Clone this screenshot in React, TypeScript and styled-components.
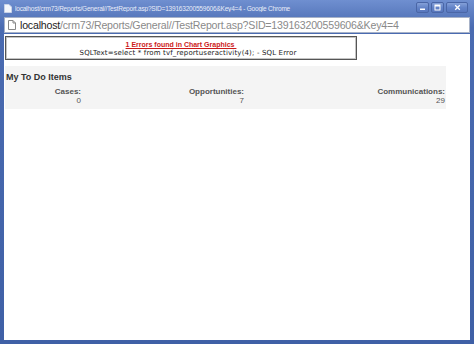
import styled, { createGlobalStyle } from "styled-components";

const GlobalStyle = createGlobalStyle`
  html, body {
    margin: 0;
    padding: 0;
    width: 474px;
    height: 344px;
    overflow: hidden;
    background: #4566a8;
  }
`;

const Window = styled.div`
  width: 474px;
  height: 344px;
  box-sizing: border-box;
  display: flex;
  flex-direction: column;
  background: linear-gradient(180deg, #6f8fd0 0%, #4a6bb1 8%, #3f60a6 100%);
  padding: 0 4px 4px 4px;
`;

const TitleBar = styled.div`
  height: 17px;
  display: flex;
  align-items: center;
  gap: 3px;
  color: #ffffff;
  font-size: 6.5px;
  font-family: "Liberation Sans", Arial, sans-serif;
  white-space: nowrap;
`;

const TitleText = styled.span`
  flex: 1;
  overflow: hidden;
  letter-spacing: -0.2px;
  color: #e8edf9;
`;

const WinButtons = styled.div`
  display: flex;
  gap: 2px;
  align-self: flex-start;
  margin-top: 2px;
  margin-right: 2px;
`;

const WinButton = styled.div<{ wide?: boolean }>`
  width: ${(p) => (p.wide ? "22px" : "13px")};
  height: 11px;
  display: flex;
  align-items: center;
  justify-content: center;
  border-radius: 2px;
  background: linear-gradient(180deg, #84a0d8 0%, #6484c8 50%, #5776bd 100%);
  border: 1px solid #4a66a6;
  box-sizing: border-box;
`;

const AddressBar = styled.div`
  height: 14px;
  background: #ffffff;
  border: 1px solid #a7b2c8;
  display: flex;
  align-items: center;
  gap: 4px;
  padding-left: 3px;
  font-family: "Liberation Sans", Arial, sans-serif;
  font-size: 10.6px;
  letter-spacing: -0.2px;
  white-space: nowrap;
  overflow: hidden;
`;

const PageGlyph = styled.svg`
  flex-shrink: 0;
`;

const Host = styled.span`
  color: #222222;
`;

const Path = styled.span`
  color: #8a8a8a;
`;

const Page = styled.div`
  flex: 1;
  background: #ffffff;
  margin-top: 1px;
  padding: 2px 1px 0 1px;
  display: flex;
  flex-direction: column;
  font-family: "Liberation Sans", Arial, sans-serif;
  color: #333333;
`;

const ErrorBox = styled.div`
  width: 352px;
  height: 24px;
  box-sizing: border-box;
  border: 1px solid #555555;
  box-shadow: inset 0 0 0 1px #c4c4c4;
  padding-top: 3px;
  display: flex;
  flex-direction: column;
  align-items: center;
  font-size: 7px;
  line-height: 9px;
`;

const ErrorTitle = styled.span`
  color: #cc1a1a;
  font-weight: bold;
  text-decoration: underline;
`;

const ErrorText = styled.span`
  color: #222222;
  font-family: "DejaVu Sans", Verdana, sans-serif;
  font-size: 7px;
  letter-spacing: 0.15px;
  line-height: 9px;
  margin-left: 14px;
`;

const Panel = styled.div`
  margin-top: 6px;
  width: 441px;
  height: 43px;
  background: #f4f4f4;
  padding: 6px 1px 0 1px;
  box-sizing: border-box;
`;

const PanelTitle = styled.div`
  font-size: 9px;
  font-weight: bold;
  color: #333333;
  margin-bottom: 5px;
`;

const Stats = styled.div`
  display: grid;
  grid-template-columns: 75px 163px 201px;
  font-size: 8px;
  line-height: 9px;
`;

const Stat = styled.div`
  display: flex;
  flex-direction: column;
  align-items: flex-end;
`;

const StatLabel = styled.span`
  font-weight: bold;
  color: #555555;
`;

const StatValue = styled.span`
  color: #555555;
`;

const stats = [
  { label: "Cases:", value: "0" },
  { label: "Opportunities:", value: "7" },
  { label: "Communications:", value: "29" },
];

export default function App() {
  return (
    <>
      <GlobalStyle />
      <Window>
        <TitleBar>
          <PageGlyph width="8" height="9" viewBox="0 0 8 9">
            <path d="M0.5 0.5 H5 L7.5 3 V8.5 H0.5 Z" fill="#f4f6fb" stroke="#c9d3e8" />
          </PageGlyph>
          <TitleText>
            localhost/crm73/Reports/General//TestReport.asp?SID=139163200559606&amp;Key4=4 - Google Chrome
          </TitleText>
          <WinButtons>
            <WinButton>
              <svg width="7" height="7" viewBox="0 0 7 7">
                <rect x="1" y="4.5" width="5" height="1.5" fill="#fff" />
              </svg>
            </WinButton>
            <WinButton>
              <svg width="7" height="7" viewBox="0 0 7 7">
                <rect x="1" y="1" width="5" height="5" fill="none" stroke="#fff" />
                <rect x="1" y="1" width="5" height="1.5" fill="#fff" />
              </svg>
            </WinButton>
            <WinButton wide>
              <svg width="7" height="7" viewBox="0 0 7 7">
                <path d="M1.2 1.2 L5.8 5.8 M5.8 1.2 L1.2 5.8" stroke="#fff" strokeWidth="1.3" />
              </svg>
            </WinButton>
          </WinButtons>
        </TitleBar>
        <AddressBar>
          <PageGlyph width="8" height="10" viewBox="0 0 8 10">
            <path d="M0.5 0.5 H5 L7.5 3 V9.5 H0.5 Z" fill="#fff" stroke="#888" />
            <path d="M5 0.5 V3 H7.5" fill="none" stroke="#888" />
          </PageGlyph>
          <span>
            <Host>localhost</Host>
            <Path>/crm73/Reports/General//TestReport.asp?SID=139163200559606&amp;Key4=4</Path>
          </span>
        </AddressBar>
        <Page>
          <ErrorBox>
            <ErrorTitle>1 Errors found in Chart Graphics&nbsp;</ErrorTitle>
            <ErrorText>SQLText=select * from tvf_reportuseractivity(4); - SQL Error</ErrorText>
          </ErrorBox>
          <Panel>
            <PanelTitle>My To Do Items</PanelTitle>
            <Stats>
              {stats.map((s) => (
                <Stat key={s.label}>
                  <StatLabel>{s.label}</StatLabel>
                  <StatValue>{s.value}</StatValue>
                </Stat>
              ))}
            </Stats>
          </Panel>
        </Page>
      </Window>
    </>
  );
}
